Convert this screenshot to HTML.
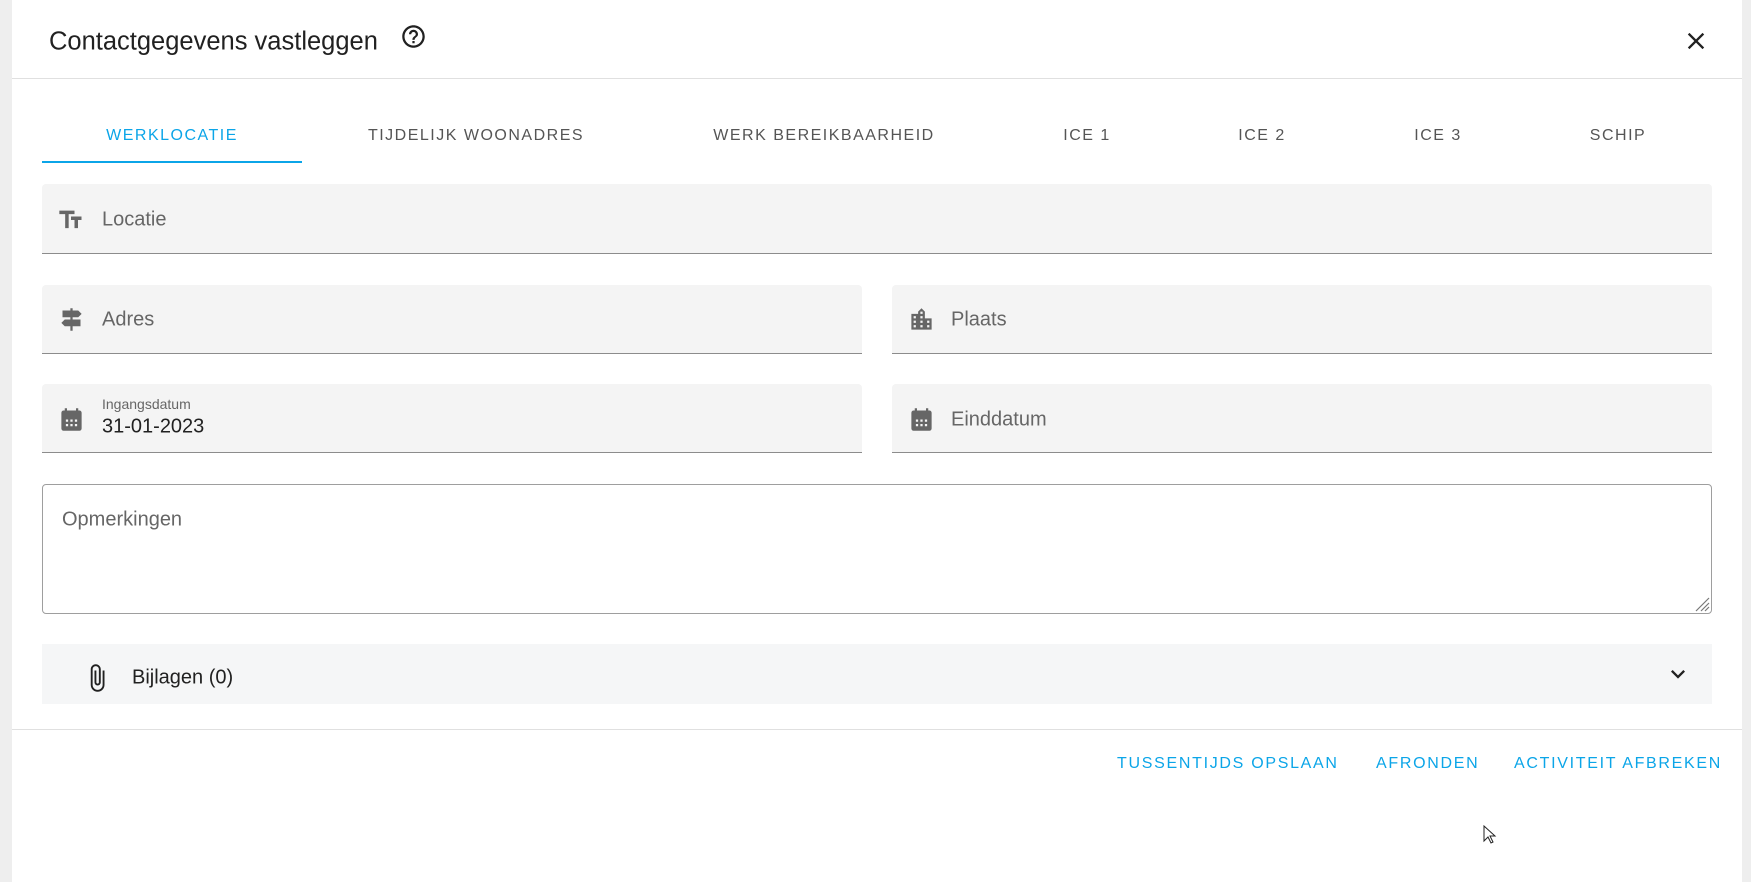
<!DOCTYPE html>
<html><head><meta charset="utf-8"><style>
*{margin:0;padding:0;box-sizing:border-box}
html,body{width:1751px;height:882px;overflow:hidden;background:#eeeeee;font-family:"Liberation Sans",sans-serif}
.panel{position:absolute;left:12px;top:0;width:1730px;height:882px;background:#fff}
.a{position:absolute}
.t{position:absolute;white-space:nowrap;transform:translateY(-50%)}
.tab{position:absolute;top:136px;transform:translate(-50%,-50%);font-size:16px;letter-spacing:1.5px;color:#555;white-space:nowrap}
.field{position:absolute;background:#f4f4f4;border-bottom:1px solid #8c8c8c;border-radius:4px 4px 0 0}
.lbl{font-size:20px;color:#666}
.btn{position:absolute;top:764px;transform:translateY(-50%);font-size:16px;letter-spacing:1.7px;color:#0ba5e8;white-space:nowrap}
svg{position:absolute}
</style></head><body>
<div class="panel"></div>
<div class="t" style="left:49px;top:42px;font-size:25.5px;color:#212121">Contactgegevens vastleggen</div>
<svg style="left:400px;top:23px" width="27" height="27" viewBox="0 0 24 24"><path fill="#212121" d="M11 18h2v-2h-2v2zm1-16C6.48 2 2 6.480 2 12s4.48 10 10 10 10-4.48 10-10S17.52 2 12 2zm0 18c-4.41 0-8-3.59-8-8s3.59-8 8-8 8 3.59 8 8-3.59 8-8 8zm0-14c-2.21 0-4 1.790-4 4h2c0-1.1.9-2 2-2s2 .9 2 2c0 2-3 1.75-3 5h2c0-2.25 3-2.5 3-5 0-2.21-1.79-4-4-4z"/></svg>
<svg style="left:1682px;top:27px" width="28" height="28" viewBox="0 0 24 24"><path fill="#212121" d="M19 6.41L17.59 5 12 10.59 6.41 5 5 6.41 10.59 12 5 17.59 6.41 19 12 13.41 17.59 19 19 17.59 13.41 12z"/></svg>
<div class="a" style="left:12px;top:78px;width:1730px;height:1px;background:#e0e0e0"></div>

<div class="tab" style="left:172px;color:#0ba5e8">WERKLOCATIE</div>
<div class="tab" style="left:476px">TIJDELIJK WOONADRES</div>
<div class="tab" style="left:824px">WERK BEREIKBAARHEID</div>
<div class="tab" style="left:1087px">ICE 1</div>
<div class="tab" style="left:1262px">ICE 2</div>
<div class="tab" style="left:1438px">ICE 3</div>
<div class="tab" style="left:1618px">SCHIP</div>
<div class="a" style="left:42px;top:161px;width:260px;height:2px;background:#0ba5e8"></div>

<div class="field" style="left:42px;top:184px;width:1670px;height:70px"></div>
<svg style="left:57px;top:206px" width="28" height="28" viewBox="0 0 24 24"><path fill="#666" d="M9 4v3h5v12h3V7h5V4H9zm-6 8h3v7h3v-7h3V9H3v3z" transform="translate(24 0) scale(-1 1)"/></svg>
<div class="t lbl" style="left:102px;top:220px">Locatie</div>

<div class="field" style="left:42px;top:285px;width:820px;height:69px"></div>
<svg style="left:58px;top:306px" width="27" height="27" viewBox="0 0 24 24"><path fill="#666" d="M13 10h5l3-3-3-3h-5V2h-2v2H4v6h7v2H6l-3 3 3 3h5v4h2v-4h7v-6h-7v-2z"/></svg>
<div class="t lbl" style="left:102px;top:320px">Adres</div>
<div class="field" style="left:892px;top:285px;width:820px;height:69px"></div>
<svg style="left:908px;top:306px" width="27" height="27" viewBox="0 0 24 24"><path fill="#666" d="M15 11V5l-3-3-3 3v2H3v14h18V11h-6zm-8 8H5v-2h2v2zm0-4H5v-2h2v2zm0-4H5V9h2v2zm6 8h-2v-2h2v2zm0-4h-2v-2h2v2zm0-4h-2V9h2v2zm0-4h-2V5h2v2zm6 12h-2v-2h2v2zm0-4h-2v-2h2v2z"/></svg>
<div class="t lbl" style="left:951px;top:320px">Plaats</div>

<div class="field" style="left:42px;top:384px;width:820px;height:69px"></div>
<svg style="left:58px;top:406px" width="27" height="27" viewBox="0 0 24 24"><path fill="#666" d="M6 2h2v2h8V2h2v2h1c1.1 0 2 .9 2 2v14c0 1.1-.9 2-2 2H5c-1.1 0-2-.9-2-2V6c0-1.1.9-2 2-2h1z"/><g fill="#f4f4f4"><rect x="7" y="12" width="2" height="2"/><rect x="11" y="12" width="2" height="2"/><rect x="15" y="12" width="2" height="2"/><rect x="7" y="16" width="2" height="2"/><rect x="11" y="16" width="2" height="2"/><rect x="15" y="16" width="2" height="2"/></g></svg>
<div class="t" style="left:102px;top:404px;font-size:14px;color:#666">Ingangsdatum</div>
<div class="t" style="left:102px;top:427px;font-size:20px;color:#212121">31-01-2023</div>
<div class="field" style="left:892px;top:384px;width:820px;height:69px"></div>
<svg style="left:908px;top:406px" width="27" height="27" viewBox="0 0 24 24"><path fill="#666" d="M6 2h2v2h8V2h2v2h1c1.1 0 2 .9 2 2v14c0 1.1-.9 2-2 2H5c-1.1 0-2-.9-2-2V6c0-1.1.9-2 2-2h1z"/><g fill="#f4f4f4"><rect x="7" y="12" width="2" height="2"/><rect x="11" y="12" width="2" height="2"/><rect x="15" y="12" width="2" height="2"/><rect x="7" y="16" width="2" height="2"/><rect x="11" y="16" width="2" height="2"/><rect x="15" y="16" width="2" height="2"/></g></svg>
<div class="t lbl" style="left:951px;top:420px">Einddatum</div>

<div class="a" style="left:42px;top:484px;width:1670px;height:130px;border:1px solid #9e9e9e;border-radius:4px"></div>
<div class="t lbl" style="left:62px;top:520px">Opmerkingen</div>
<svg style="left:1692px;top:594px" width="18" height="18" viewBox="0 0 18 18"><path stroke="#777" stroke-width="1.2" d="M17 4L4 17M17 9L9 17M17 13L13 17"/></svg>

<div class="a" style="left:42px;top:644px;width:1670px;height:60px;background:#f5f6f7"></div>
<svg style="left:82px;top:662px" width="30" height="32" viewBox="0 0 24 24"><path fill="#212121" d="M16.5 6v11.5c0 2.21-1.79 4-4 4s-4-1.79-4-4V5a2.5 2.5 0 015 0v10.5c0 .55-.45 1-1 1s-1-.45-1-1V6H10v9.5a2.5 2.5 0 005 0V5c0-2.21-1.79-4-4-4S7 2.79 7 5v12.5c0 3.04 2.46 5.5 5.5 5.5s5.5-2.46 5.5-5.5V6h-1.5z"/></svg>
<div class="t" style="left:132px;top:678px;font-size:20px;color:#212121">Bijlagen (0)</div>
<svg style="left:1664px;top:660px" width="28" height="28" viewBox="0 0 24 24"><path fill="#212121" d="M16.59 8.59L12 13.17 7.41 8.59 6 10l6 6 6-6z"/></svg>

<div class="a" style="left:12px;top:729px;width:1730px;height:1px;background:#e0e0e0"></div>
<div class="btn" style="left:1117px">TUSSENTIJDS OPSLAAN</div>
<div class="btn" style="left:1376px">AFRONDEN</div>
<div class="btn" style="left:1514px">ACTIVITEIT AFBREKEN</div>
<svg style="left:1483px;top:825px" width="14" height="20" viewBox="0 0 14 20"><path d="M1 1v15l4-4 3 6 2-1-3-6h5z" fill="#fff" stroke="#222" stroke-width="1"/></svg>
</body></html>
